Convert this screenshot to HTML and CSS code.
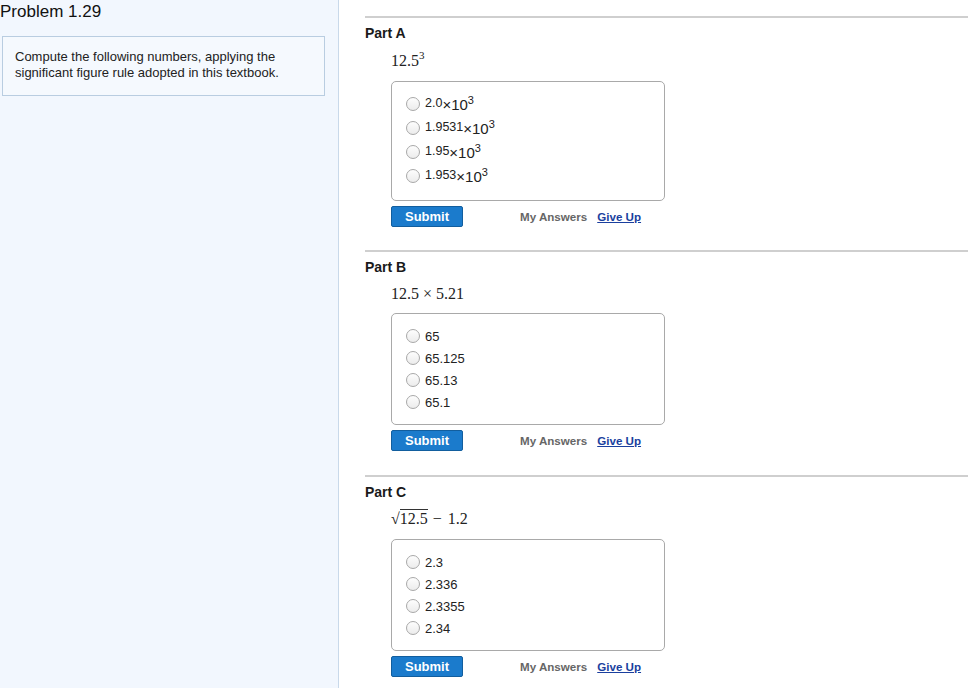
FILE: index.html
```html
<!DOCTYPE html>
<html>
<head>
<meta charset="utf-8">
<link rel="stylesheet" href="styles.css">
</head>
<body>
<div class="page">
  <aside class="sidebar">
    <h1 class="title">Problem 1.29</h1>
    <div class="intro">Compute the following numbers, applying the significant figure rule adopted in this textbook.</div>
  </aside>
  <main class="main">
    <section class="part first">
      <h2 class="part-label">Part A</h2>
      <div class="math">12.5<sup>3</sup></div>
      <div class="choices sci">
        <label class="opt"><span class="radio"></span><span class="n">2.0</span><span class="m">×10<sup>3</sup></span></label>
        <label class="opt"><span class="radio"></span><span class="n">1.9531</span><span class="m">×10<sup>3</sup></span></label>
        <label class="opt"><span class="radio"></span><span class="n">1.95</span><span class="m">×10<sup>3</sup></span></label>
        <label class="opt"><span class="radio"></span><span class="n">1.953</span><span class="m">×10<sup>3</sup></span></label>
      </div>
      <div class="actions">
        <button class="submit">Submit</button>
        <span class="my">My Answers</span>
        <a class="giveup" href="#">Give Up</a>
      </div>
    </section>
    <section class="part compact">
      <h2 class="part-label">Part B</h2>
      <div class="math">12.5 × 5.21</div>
      <div class="choices">
        <label class="opt"><span class="radio"></span><span>65</span></label>
        <label class="opt"><span class="radio"></span><span>65.125</span></label>
        <label class="opt"><span class="radio"></span><span>65.13</span></label>
        <label class="opt"><span class="radio"></span><span>65.1</span></label>
      </div>
      <div class="actions">
        <button class="submit">Submit</button>
        <span class="my">My Answers</span>
        <a class="giveup" href="#">Give Up</a>
      </div>
    </section>
    <section class="part wide-gap">
      <h2 class="part-label">Part C</h2>
      <div class="math"><span class="sqrt">√</span><span class="over">12.5</span><span class="minus">−</span>1.2</div>
      <div class="choices">
        <label class="opt"><span class="radio"></span><span>2.3</span></label>
        <label class="opt"><span class="radio"></span><span>2.336</span></label>
        <label class="opt"><span class="radio"></span><span>2.3355</span></label>
        <label class="opt"><span class="radio"></span><span>2.34</span></label>
      </div>
      <div class="actions">
        <button class="submit">Submit</button>
        <span class="my">My Answers</span>
        <a class="giveup" href="#">Give Up</a>
      </div>
    </section>
  </main>
</div>
</body>
</html>
```

FILE: styles.css
```css
html, body {
  margin: 0;
  padding: 0;
  background: #fff;
  font-family: "Liberation Sans", Arial, sans-serif;
  color: #222;
}
.page {
  display: flex;
  min-height: 688px;
}
.sidebar {
  flex: none;
  width: 339px;
  box-sizing: border-box;
  background: #f2f7fe;
  border-right: 1px solid #c9d9ea;
  padding-top: 2px;
}
.title {
  margin: 0;
  font-size: 17px;
  font-weight: normal;
  line-height: 20px;
  color: #111;
}
.intro {
  margin: 14px 0 0 2px;
  width: 323px;
  box-sizing: border-box;
  height: 60px;
  border: 1px solid #b9cde1;
  background: #f5f9fe;
  padding: 12px 30px 0 12px;
  font-size: 13px;
  line-height: 16px;
  color: #222;
}
.main {
  flex: 1;
  padding-left: 26px;
}
.part {
  border-top: 2px solid #cfcfcf;
  padding-top: 7px;
  margin-top: 23px;
}
.part.first {
  margin-top: 16px;
}
.part.wide-gap {
  margin-top: 24px;
  padding-top: 7px;
}
.part-label {
  margin: 0;
  font-size: 14px;
  font-weight: bold;
  line-height: 17px;
  color: #1a1a1a;
}
.math {
  margin: 9px 0 0 26px;
  font-family: "Liberation Serif", "Times New Roman", serif;
  font-size: 16px;
  line-height: 20px;
  height: 20px;
  color: #222;
}
.compact .math {
  margin-top: 8px;
}
.compact .choices {
  margin-top: 9px;
}
.wide-gap .math {
  margin-top: 8px;
}
.math sup {
  font-size: 11px;
  vertical-align: 0;
  position: relative;
  top: -7px;
}
.over {
  border-top: 1px solid #333;
  display: inline-block;
  line-height: 17px;
}
.minus {
  margin: 0 6px 0 5px;
}
.choices {
  margin: 10px 0 0 26px;
  width: 274px;
  box-sizing: border-box;
  border: 1px solid #a9a9a9;
  border-radius: 5px;
  padding: 11px 14px;
  display: flex;
  flex-direction: column;
}
.choices.sci {
  padding: 10px 14px 12px;
}
.opt {
  display: flex;
  align-items: center;
  height: 22px;
  font-size: 13px;
  color: #222;
}
.sci .opt {
  height: 24px;
}
.radio {
  width: 12px;
  height: 12px;
  border: 1px solid #a8a8a8;
  border-radius: 50%;
  background: linear-gradient(#fdfdfd, #ececec);
  margin-right: 5px;
  flex: none;
}
.n {
  font-size: 12.5px;
  position: relative;
  top: -1px;
}
.m {
  font-size: 15px;
}
.m sup {
  font-size: 11px;
  vertical-align: 0;
  position: relative;
  top: -6px;
}
.actions {
  margin: 5px 0 0 26px;
  display: flex;
  align-items: center;
  height: 21px;
}
.submit {
  width: 72px;
  height: 21px;
  padding: 0;
  background: #1b7bcc;
  border: 1px solid #125e9e;
  border-radius: 2px;
  color: #fff;
  font-family: "Liberation Sans", Arial, sans-serif;
  font-weight: bold;
  font-size: 13px;
  line-height: 17px;
}
.my {
  margin-left: 57px;
  font-size: 11.6px;
  font-weight: bold;
  color: #666;
}
.giveup {
  margin-left: 10px;
  font-size: 11.6px;
  font-weight: bold;
  color: #1a3f9e;
  text-decoration: underline;
}
```
